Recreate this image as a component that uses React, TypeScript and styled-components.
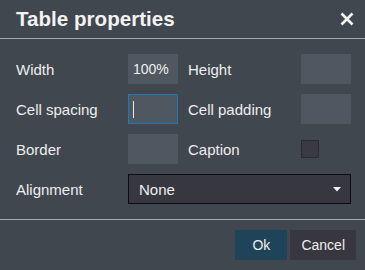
import React from "react";
import styled, { createGlobalStyle } from "styled-components";

const Global = createGlobalStyle`
  html, body { margin: 0; padding: 0; background: #40474f; }
  body { font-family: "Liberation Sans", Arial, sans-serif; }
`;

const Dialog = styled.div`
  width: 365px;
  height: 270px;
  background: #40474f;
  color: #eeeeee;
  display: flex;
  flex-direction: column;
  font-family: "Liberation Sans", Arial, sans-serif;
`;

const Header = styled.div`
  height: 38px;
  display: flex;
  align-items: center;
  justify-content: space-between;
  padding: 0 11px 0 16px;
  border-bottom: 1px solid #a7a9ab;
`;

const Title = styled.div`
  font-size: 20.6px;
  font-weight: bold;
  color: #f2f2f2;
`;

const Close = styled.button`
  border: 0;
  background: none;
  padding: 0;
  width: 14px;
  height: 14px;
  display: flex;
  color: #f2f2f2;
  cursor: pointer;
`;

const Body = styled.div`
  padding: 15px 14px 15px 16px;
  display: grid;
  grid-template-columns: 112px 50px 123px 50px;
  grid-auto-rows: 30px;
  row-gap: 10px;
  align-items: center;
  border-bottom: 1px solid #a7a9ab;
`;

const Label = styled.div<{ $second?: boolean }>`
  font-size: 15px;
  color: #eeeeee;
  padding-left: ${(p) => (p.$second ? "10px" : "0")};
`;

const Field = styled.div<{ $focused?: boolean }>`
  box-sizing: border-box;
  height: 30px;
  background: #4f5861;
  border: 1px solid ${(p) => (p.$focused ? "#2278b3" : "transparent")};
  font-size: 14px;
  color: #eeeeee;
  display: flex;
  align-items: center;
  padding-left: 4px;
`;

const Caret = styled.span`
  width: 1px;
  height: 17px;
  background: #e8e8e8;
`;

const Check = styled.div`
  box-sizing: border-box;
  width: 18px;
  height: 18px;
  background: #3a3a42;
  border: 1px solid #2a2a31;
`;

const Select = styled.div`
  grid-column: 2 / 5;
  box-sizing: border-box;
  height: 30px;
  background: #37373f;
  border: 1px solid #0d0d0f;
  display: flex;
  align-items: center;
  justify-content: space-between;
  padding: 0 9px 0 10px;
  font-size: 15px;
  color: #eeeeee;
`;

const Footer = styled.div`
  flex: 1;
  display: flex;
  justify-content: flex-end;
  align-items: center;
  gap: 3px;
  padding: 0 9px;
`;

const Button = styled.button<{ $primary?: boolean }>`
  height: 30px;
  border: 0;
  font-family: "Liberation Sans", Arial, sans-serif;
  font-size: 14px;
  color: #eeeeee;
  background: ${(p) => (p.$primary ? "#1f4358" : "#38373f")};
  min-width: ${(p) => (p.$primary ? "52px" : "0")};
  padding: 0 11px;
`;

export default function App() {
  return (
    <>
      <Global />
      <Dialog>
        <Header>
          <Title>Table properties</Title>
          <Close aria-label="Close">
            <svg width="14" height="14" viewBox="0 0 14 14">
              <path d="M1.5 1.5 L12.5 12.5 M12.5 1.5 L1.5 12.5" stroke="currentColor" strokeWidth="2.6" strokeLinecap="butt" />
            </svg>
          </Close>
        </Header>
        <Body>
          <Label>Width</Label>
          <Field>100%</Field>
          <Label $second>Height</Label>
          <Field />
          <Label>Cell spacing</Label>
          <Field $focused>
            <Caret />
          </Field>
          <Label $second>Cell padding</Label>
          <Field />
          <Label>Border</Label>
          <Field />
          <Label $second>Caption</Label>
          <Check />
          <Label>Alignment</Label>
          <Select>
            <span>None</span>
            <svg width="8" height="5" viewBox="0 0 8 5">
              <path d="M0 0 H8 L4 4.5 Z" fill="#f2f2f2" />
            </svg>
          </Select>
        </Body>
        <Footer>
          <Button $primary>Ok</Button>
          <Button>Cancel</Button>
        </Footer>
      </Dialog>
    </>
  );
}
